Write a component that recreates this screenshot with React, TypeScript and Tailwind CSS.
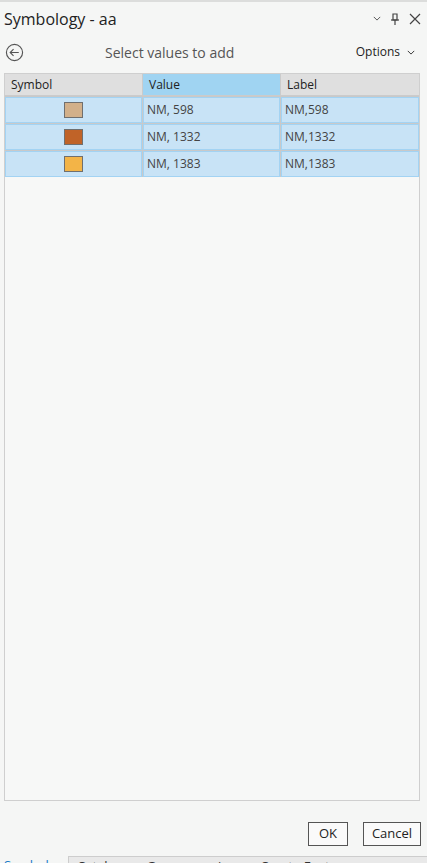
import React from 'react';

type Row = { color: string; value: string; label: string };

const rows: Row[] = [
  { color: '#d2b08a', value: 'NM, 598', label: 'NM,598' },
  { color: '#c06328', value: 'NM, 1332', label: 'NM,1332' },
  { color: '#f3b447', value: 'NM, 1383', label: 'NM,1383' },
];

const font = { fontFamily: '"Open Sans", "Noto Sans", sans-serif' };

const Chevron = ({ className }: { className?: string }) => (
  <svg viewBox="0 0 10 6" className={className} fill="none" stroke="currentColor" strokeWidth="1.2">
    <path d="M1 1l4 4 4-4" />
  </svg>
);

const Pin = () => (
  <svg viewBox="0 0 10 12" className="w-[10px] h-[12px] text-[#444]" fill="none" stroke="currentColor" strokeWidth="1.2">
    <path d="M3 1h4v6H3z" />
    <path d="M1 7h8" />
    <path d="M5 7v5" />
  </svg>
);

const Close = () => (
  <svg viewBox="0 0 12 12" className="w-[12px] h-[12px] text-[#444]" fill="none" stroke="currentColor" strokeWidth="1.2">
    <path d="M1 1l10 10M11 1L1 11" />
  </svg>
);

const BackCircle = () => (
  <svg viewBox="0 0 20 20" className="w-[19px] h-[19px] text-[#555]" fill="none" stroke="currentColor" strokeWidth="1.2">
    <circle cx="10" cy="10" r="8.5" />
    <path d="M14.5 10H5.5M9 6.5L5.5 10 9 13.5" />
  </svg>
);

export default function App() {
  return (
    <div
      className="w-[427px] h-[863px] bg-[#f5f6f5] border-t-2 border-[#dcdddc] flex flex-col overflow-hidden text-[#333]"
      style={font}
    >
      {/* title bar */}
      <div className="shrink-0 h-[33px] flex items-center pl-[4px] pr-[6px]">
        <span className="text-[16px] text-[#222] leading-none">Symbology - aa</span>
        <div className="ml-auto flex items-center gap-[9px]">
          <Chevron className="w-[8px] h-[5px] text-[#555]" />
          <Pin />
          <Close />
        </div>
      </div>

      {/* header row */}
      <div className="shrink-0 h-[34px] flex items-center pl-[5px] pr-[12px]">
        <BackCircle />
        <span className="ml-[81px] text-[14px] text-[#555]">Select values to add</span>
        <div className="ml-auto flex items-center gap-[7px] text-[12px] text-[#222]">
          <span>Options</span>
          <Chevron className="w-[8px] h-[5px] text-[#333]" />
        </div>
      </div>

      {/* table */}
      <div className="shrink-0 mt-[4px] mx-[4px] w-[416px] h-[728px] border border-[#cfcfcf] bg-[#f7f8f7] flex flex-col">
        <div className="grid grid-cols-[138px_138px_1fr] h-[22px] bg-[#dfdfdf] border-b border-[#cbcbcb] text-[12px] text-[#222]">
          <div className="flex items-center pl-[6px] border-r border-[#cbcbcb]">Symbol</div>
          <div className="flex items-center pl-[6px] bg-[#a0d4f2] border-r border-[#cbcbcb]">Value</div>
          <div className="flex items-center pl-[6px]">Label</div>
        </div>
        {rows.map((r) => (
          <div key={r.value} className="grid grid-cols-[138px_138px_1fr] h-[27px] bg-[#c9c9c9] text-[12px] text-[#444]">
            <div className="flex items-center justify-center bg-[#c8e3f6] border border-[#a3d3f3] mr-px mt-px">
              <div className="w-[19px] h-[16px] border border-[#6f6f6f]" style={{ backgroundColor: r.color }} />
            </div>
            <div className="flex items-center pl-[3px] bg-[#c8e3f6] border border-[#a3d3f3] mr-px mt-px">{r.value}</div>
            <div className="flex items-center pl-[3px] bg-[#c8e3f6] border border-[#a3d3f3] mt-px">{r.label}</div>
          </div>
        ))}
      </div>

      {/* buttons */}
      <div className="shrink-0 mt-[21px] flex justify-end gap-[15px] pr-[6px]">
        <button className="w-[40px] h-[24px] border border-[#555] bg-[#fafafa] text-[13px] text-[#222]">OK</button>
        <button className="w-[58px] h-[24px] border border-[#555] bg-[#fafafa] text-[13px] text-[#222]">Cancel</button>
      </div>

      {/* bottom tabs, cut off by the window */}
      <div className="shrink-0 mt-[10px] flex h-[22px] text-[13px] leading-none">
        <div className="w-[68px] pl-[4px] pt-[3px] text-[#1a7bc9]">Symbology</div>
        <div className="flex-1 flex gap-[24px] pl-[8px] pt-[3px] bg-[#e9e9e9] border-t border-l border-[#cdcdcd] text-[#333]">
          <span>Catalog</span>
          <span>Geoprocessing</span>
          <span>Create Features</span>
        </div>
      </div>
    </div>
  );
}
